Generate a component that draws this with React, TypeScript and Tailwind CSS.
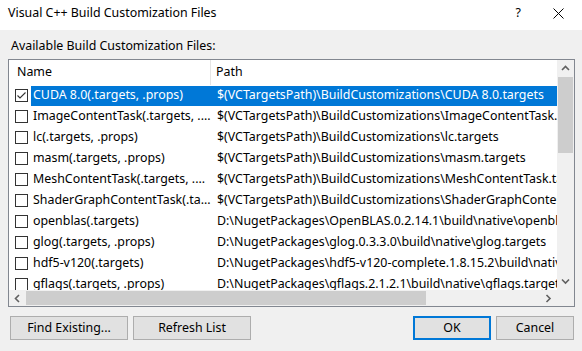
import React from "react";

type Row = { name: string; path: string; checked?: boolean };

const rows: Row[] = [
    { name: "CUDA 8.0(.targets, .props)", path: "$(VCTargetsPath)\\BuildCustomizations\\CUDA 8.0.targets", checked: true },
    { name: "ImageContentTask(.targets, ....", path: "$(VCTargetsPath)\\BuildCustomizations\\ImageContentTask.targets" },
    { name: "lc(.targets, .props)", path: "$(VCTargetsPath)\\BuildCustomizations\\lc.targets" },
    { name: "masm(.targets, .props)", path: "$(VCTargetsPath)\\BuildCustomizations\\masm.targets" },
    { name: "MeshContentTask(.targets, ....", path: "$(VCTargetsPath)\\BuildCustomizations\\MeshContentTask.targets" },
    { name: "ShaderGraphContentTask(.ta...", path: "$(VCTargetsPath)\\BuildCustomizations\\ShaderGraphContentTask.targets" },
    { name: "openblas(.targets)", path: "D:\\NugetPackages\\OpenBLAS.0.2.14.1\\build\\native\\openblas.targets" },
    { name: "glog(.targets, .props)", path: "D:\\NugetPackages\\glog.0.3.3.0\\build\\native\\glog.targets" },
    { name: "hdf5-v120(.targets)", path: "D:\\NugetPackages\\hdf5-v120-complete.1.8.15.2\\build\\native\\hdf5-v120.targets" },
    { name: "gflags(.targets, .props)", path: "D:\\NugetPackages\\gflags.2.1.2.1\\build\\native\\gflags.targets" },
];

const Chevron = ({ dir }: { dir: "up" | "down" | "left" | "right" }) => {
    const d = {
        up: "M1 5 L4.5 1.5 L8 5",
        down: "M1 1.5 L4.5 5 L8 1.5",
        left: "M5 1 L1.5 4.5 L5 8",
        right: "M1.5 1 L5 4.5 L1.5 8",
    }[dir];
    const horiz = dir === "up" || dir === "down";
    return (
        <svg width={horiz ? 9 : 7} height={horiz ? 7 : 9} viewBox={horiz ? "0 0 9 7" : "0 0 7 9"}>
            <path d={d} fill="none" stroke="#606060" strokeWidth="1.6" />
        </svg>
    );
};

const CheckBox = ({ checked }: { checked?: boolean }) => (
    <div className="w-[13px] h-[13px] border border-[#333333] bg-white flex items-center justify-center">
        {checked && (
            <svg width="11" height="11" viewBox="0 0 11 11">
                <path d="M1.5 5.5 L4 8 L9.5 2.5" fill="none" stroke="#333333" strokeWidth="1.1" />
            </svg>
        )}
    </div>
);

const Button = ({ label, primary, width }: { label: string; primary?: boolean; width: string }) => (
    <button
        className={
            "h-[24px] bg-[#e1e1e1] flex items-center justify-center " +
            width +
            (primary ? " border-2 border-[#0078d7]" : " border border-[#adadad]")
        }
    >
        {label}
    </button>
);

export default function App() {
    return (
        <div className="w-[582px] h-[351px] bg-[#f0f0f0] text-black text-[12.4px] font-['Noto_Sans','Liberation_Sans',sans-serif] flex flex-col overflow-hidden">
            {/* title bar */}
            <div className="h-[30px] pb-[4px] bg-white flex items-center pl-[8px] leading-none">
                <span>Visual C++ Build Customization Files</span>
                <span className="ml-auto mr-[32px]">?</span>
                <svg width="11" height="11" viewBox="0 0 11 11" className="mr-[18px]">
                    <path d="M0.5 0.5 L10.5 10.5 M10.5 0.5 L0.5 10.5" stroke="#000" strokeWidth="1" />
                </svg>
            </div>

            <div className="flex flex-col px-[8px]">
                <div className="mt-[8px] h-[16px] pl-[3px] leading-[16px]">Available Build Customization Files:</div>

                {/* list view */}
                <div className="mt-[5px] w-[567px] h-[248px] border border-[#828790] bg-white flex flex-col">
                    <div className="flex h-[230px]">
                        <div className="w-[548px] overflow-hidden">
                            <div className="flex h-[25px] items-center">
                                <div className="w-[202px] pl-[8px] h-full flex items-center border-r border-[#e5e5e5]">Name</div>
                                <div className="pl-[5px]">Path</div>
                            </div>
                            {rows.map((r, i) => (
                                <div key={i} className="flex h-[21px] items-center whitespace-nowrap">
                                    <div className="w-[22px] pl-[6px] shrink-0">
                                        <CheckBox checked={r.checked} />
                                    </div>
                                    <div
                                        className={
                                            "flex h-[20px] items-center flex-1 " +
                                            (r.checked ? "bg-[#0078d7] text-white" : "")
                                        }
                                    >
                                        <div className="w-[180px] pl-[2px] shrink-0 overflow-hidden">{r.name}</div>
                                        <div className="pl-[6px] overflow-hidden">{r.path}</div>
                                    </div>
                                </div>
                            ))}
                        </div>
                        {/* vertical scrollbar */}
                        <div className="w-[17px] bg-[#f0f0f0] flex flex-col">
                            <div className="h-[17px] flex items-center justify-center">
                                <Chevron dir="up" />
                            </div>
                            <div className="h-[76px] mx-px bg-[#cdcdcd]" />
                            <div className="flex-1" />
                            <div className="h-[17px] flex items-center justify-center">
                                <Chevron dir="down" />
                            </div>
                        </div>
                    </div>
                    {/* horizontal scrollbar */}
                    <div className="flex h-[17px] bg-[#f0f0f0]">
                        <div className="w-[17px] flex items-center justify-center">
                            <Chevron dir="left" />
                        </div>
                        <div className="w-[400px] my-px bg-[#cdcdcd]" />
                        <div className="flex-1" />
                        <div className="w-[17px] flex items-center justify-center">
                            <Chevron dir="right" />
                        </div>
                        <div className="w-[17px]" />
                    </div>
                </div>

                {/* buttons */}
                <div className="mt-[9px] flex items-center">
                    <div className="ml-[2px] flex gap-[5px]">
                        <Button label="Find Existing..." width="w-[118px]" />
                        <Button label="Refresh List" width="w-[118px]" />
                    </div>
                    <div className="ml-auto flex gap-[5px]">
                        <Button label="OK" width="w-[78px]" primary />
                        <Button label="Cancel" width="w-[78px]" />
                    </div>
                </div>
            </div>
        </div>
    );
}
